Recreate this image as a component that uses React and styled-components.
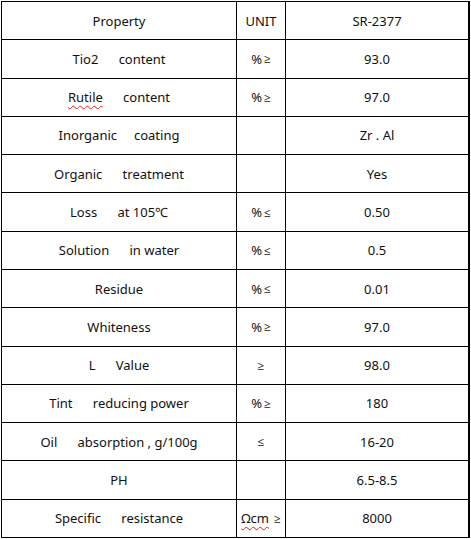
import React from 'react';
import styled, { createGlobalStyle } from 'styled-components';

const rows = [
  { prop: 'Tio2      content', unit: '%', sign: '\u2265', value: '93.0' },
  { prop: 'Rutile', propTail: '      content', wavy: true, unit: '%', sign: '\u2265', value: '97.0' },
  { prop: 'Inorganic     coating', unit: '', value: 'Zr . Al' },
  { prop: 'Organic      treatment', unit: '', value: 'Yes' },
  { prop: 'Loss      at 105\u2103', unit: '%', sign: '\u2264', value: '0.50' },
  { prop: 'Solution      in water', unit: '%', sign: '\u2264', value: '0.5' },
  { prop: 'Residue', unit: '%', sign: '\u2264', value: '0.01' },
  { prop: 'Whiteness', unit: '%', sign: '\u2265', value: '97.0' },
  { prop: 'L      Value', unit: '', sign: '\u2265', value: '98.0' },
  { prop: 'Tint      reducing power', unit: '%', sign: '\u2265', value: '180' },
  { prop: 'Oil      absorption , g/100g', unit: '', sign: '\u2264', value: '16-20' },
  { prop: 'PH', unit: '', value: '6.5-8.5' },
  { prop: 'Specific      resistance', unit: '\u03A9cm', unitWavy: true, sign: '\u2265', gap: 5, value: '8000' },
];

const GlobalStyle = createGlobalStyle`
  body {
    margin: 0;
    background: #ffffff;
    font-family: "Noto Sans", "Open Sans", sans-serif;
  }
`;

const Sheet = styled.div`
  margin: 1px 0 0 1px;
  width: 469px;
  height: 537px;
  box-sizing: border-box;
  display: grid;
  grid-template-columns: 234px 48px 182px;
  grid-template-rows: repeat(14, 1fr);
  gap: 1px;
  padding: 1px;
  background: #000000;
`;

const Cell = styled.div`
  background: #ffffff;
  display: flex;
  align-items: center;
  justify-content: center;
  font-size: 13px;
  color: #111111;
  white-space: pre;
`;

const Wavy = styled.span`
  text-decoration: underline wavy #e02020;
  text-decoration-thickness: 1px;
  text-underline-offset: 3px;
`;

const Sign = styled.span`
  margin-left: ${(p) => p.$gap}px;
  font-size: 12px;
`;

export default function App() {
  return (
    <>
      <GlobalStyle />
      <Sheet>
        <Cell>Property</Cell>
        <Cell>UNIT</Cell>
        <Cell>SR-2377</Cell>
        {rows.map((r) => (
          <React.Fragment key={r.prop}>
            <Cell>
              {r.wavy ? <Wavy>{r.prop}</Wavy> : r.prop}
              {r.propTail}
            </Cell>
            <Cell>
              {r.unitWavy ? <Wavy>{r.unit}</Wavy> : r.unit}
              {r.sign && <Sign $gap={r.unit ? r.gap || 2 : 0}>{r.sign}</Sign>}
            </Cell>
            <Cell>{r.value}</Cell>
          </React.Fragment>
        ))}
      </Sheet>
    </>
  );
}
